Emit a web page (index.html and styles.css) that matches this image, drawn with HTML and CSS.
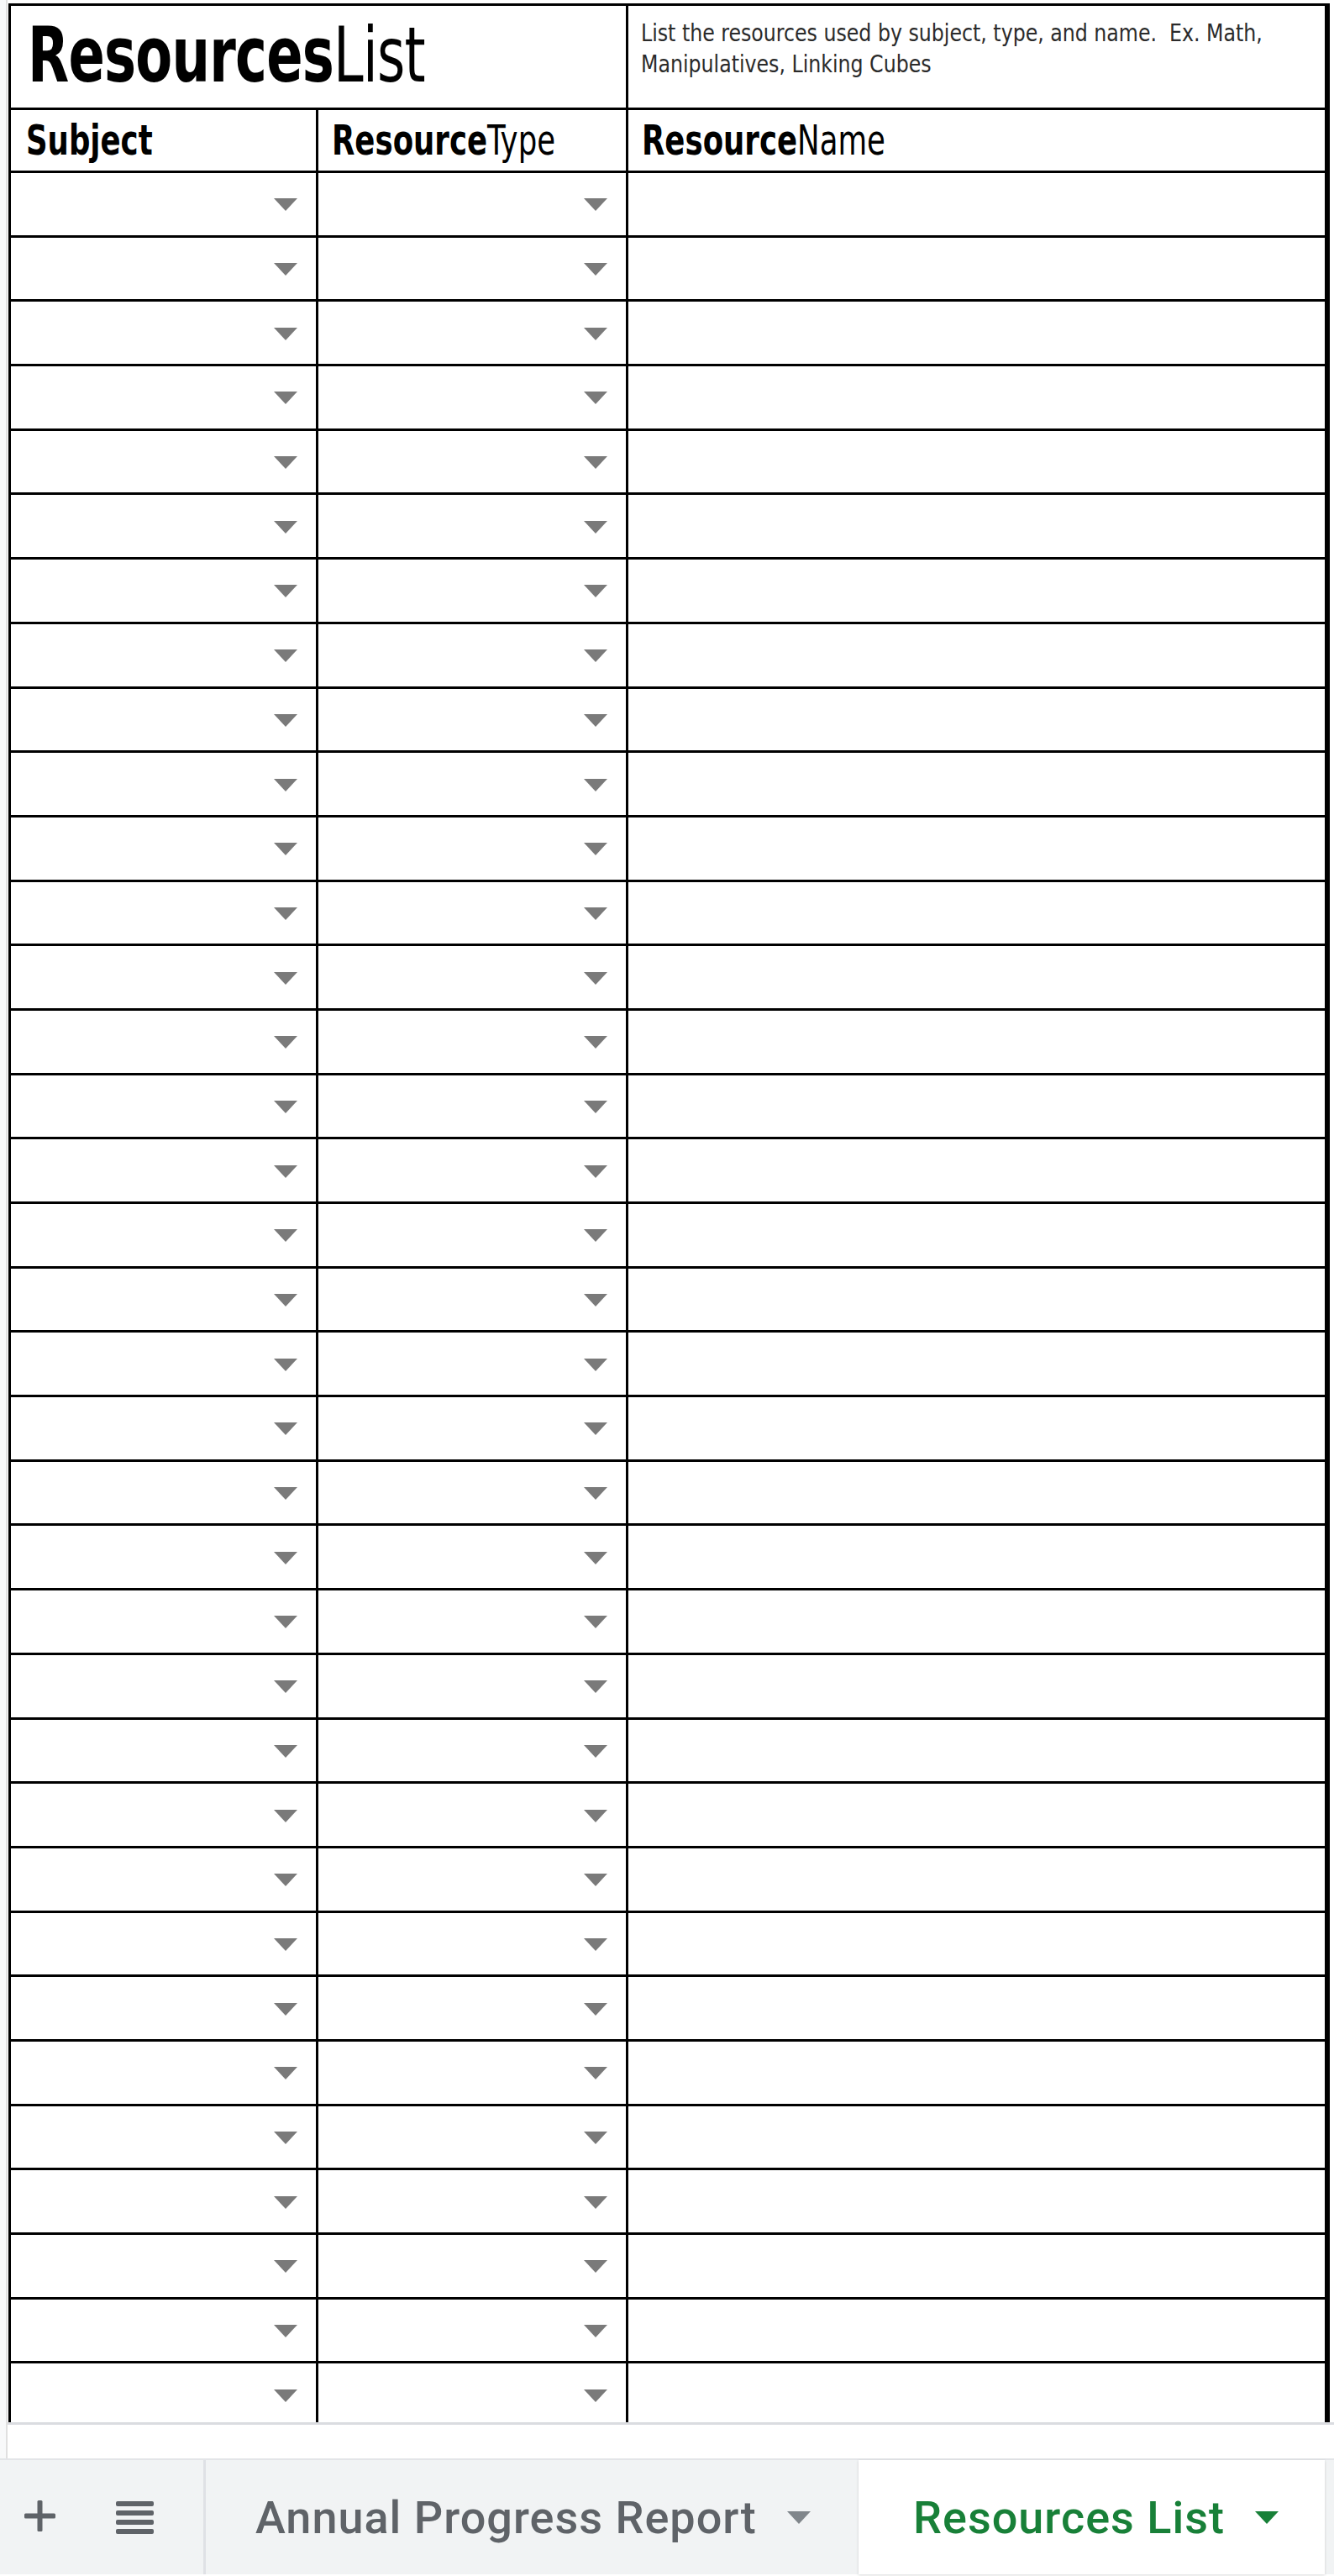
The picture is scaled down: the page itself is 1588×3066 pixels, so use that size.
FILE: index.html
```html
<!DOCTYPE html>
<html lang="en">
<head>
<meta charset="utf-8">
<title>Resources List</title>
<link rel="stylesheet" href="styles.css">
</head>
<body>
<div class="main">
  <div class="gutter"></div>
  <div class="sheet">
    <div class="viewport">
      <div class="table">
        <div class="row title-row">
          <div class="cell title-cell"><span class="cond"><span class="b">Resources</span>List</span></div>
          <div class="cell c3 desc"><span class="desc-text">List the resources used by subject, type, and name.&nbsp; Ex. Math, Manipulatives, Linking Cubes</span></div>
        </div>
        <div class="row head-row">
          <div class="cell c1 head"><span class="cond"><span class="b">Subject</span></span></div>
          <div class="cell c2 head"><span class="cond"><span class="b">Resource</span>Type</span></div>
          <div class="cell c3 head"><span class="cond"><span class="b">Resource</span>Name</span></div>
        </div>
        <div class="row data-row"><div class="cell c1 drop"></div><div class="cell c2 drop"></div><div class="cell c3"></div></div>
        <div class="row data-row"><div class="cell c1 drop"></div><div class="cell c2 drop"></div><div class="cell c3"></div></div>
        <div class="row data-row"><div class="cell c1 drop"></div><div class="cell c2 drop"></div><div class="cell c3"></div></div>
        <div class="row data-row"><div class="cell c1 drop"></div><div class="cell c2 drop"></div><div class="cell c3"></div></div>
        <div class="row data-row"><div class="cell c1 drop"></div><div class="cell c2 drop"></div><div class="cell c3"></div></div>
        <div class="row data-row"><div class="cell c1 drop"></div><div class="cell c2 drop"></div><div class="cell c3"></div></div>
        <div class="row data-row"><div class="cell c1 drop"></div><div class="cell c2 drop"></div><div class="cell c3"></div></div>
        <div class="row data-row"><div class="cell c1 drop"></div><div class="cell c2 drop"></div><div class="cell c3"></div></div>
        <div class="row data-row"><div class="cell c1 drop"></div><div class="cell c2 drop"></div><div class="cell c3"></div></div>
        <div class="row data-row"><div class="cell c1 drop"></div><div class="cell c2 drop"></div><div class="cell c3"></div></div>
        <div class="row data-row"><div class="cell c1 drop"></div><div class="cell c2 drop"></div><div class="cell c3"></div></div>
        <div class="row data-row"><div class="cell c1 drop"></div><div class="cell c2 drop"></div><div class="cell c3"></div></div>
        <div class="row data-row"><div class="cell c1 drop"></div><div class="cell c2 drop"></div><div class="cell c3"></div></div>
        <div class="row data-row"><div class="cell c1 drop"></div><div class="cell c2 drop"></div><div class="cell c3"></div></div>
        <div class="row data-row"><div class="cell c1 drop"></div><div class="cell c2 drop"></div><div class="cell c3"></div></div>
        <div class="row data-row"><div class="cell c1 drop"></div><div class="cell c2 drop"></div><div class="cell c3"></div></div>
        <div class="row data-row"><div class="cell c1 drop"></div><div class="cell c2 drop"></div><div class="cell c3"></div></div>
        <div class="row data-row"><div class="cell c1 drop"></div><div class="cell c2 drop"></div><div class="cell c3"></div></div>
        <div class="row data-row"><div class="cell c1 drop"></div><div class="cell c2 drop"></div><div class="cell c3"></div></div>
        <div class="row data-row"><div class="cell c1 drop"></div><div class="cell c2 drop"></div><div class="cell c3"></div></div>
        <div class="row data-row"><div class="cell c1 drop"></div><div class="cell c2 drop"></div><div class="cell c3"></div></div>
        <div class="row data-row"><div class="cell c1 drop"></div><div class="cell c2 drop"></div><div class="cell c3"></div></div>
        <div class="row data-row"><div class="cell c1 drop"></div><div class="cell c2 drop"></div><div class="cell c3"></div></div>
        <div class="row data-row"><div class="cell c1 drop"></div><div class="cell c2 drop"></div><div class="cell c3"></div></div>
        <div class="row data-row"><div class="cell c1 drop"></div><div class="cell c2 drop"></div><div class="cell c3"></div></div>
        <div class="row data-row"><div class="cell c1 drop"></div><div class="cell c2 drop"></div><div class="cell c3"></div></div>
        <div class="row data-row"><div class="cell c1 drop"></div><div class="cell c2 drop"></div><div class="cell c3"></div></div>
        <div class="row data-row"><div class="cell c1 drop"></div><div class="cell c2 drop"></div><div class="cell c3"></div></div>
        <div class="row data-row"><div class="cell c1 drop"></div><div class="cell c2 drop"></div><div class="cell c3"></div></div>
        <div class="row data-row"><div class="cell c1 drop"></div><div class="cell c2 drop"></div><div class="cell c3"></div></div>
        <div class="row data-row"><div class="cell c1 drop"></div><div class="cell c2 drop"></div><div class="cell c3"></div></div>
        <div class="row data-row"><div class="cell c1 drop"></div><div class="cell c2 drop"></div><div class="cell c3"></div></div>
        <div class="row data-row"><div class="cell c1 drop"></div><div class="cell c2 drop"></div><div class="cell c3"></div></div>
        <div class="row data-row"><div class="cell c1 drop"></div><div class="cell c2 drop"></div><div class="cell c3"></div></div>
        <div class="row data-row"><div class="cell c1 drop"></div><div class="cell c2 drop"></div><div class="cell c3"></div></div>
        <div class="row data-row"><div class="cell c1 drop"></div><div class="cell c2 drop"></div><div class="cell c3"></div></div>
      </div>
    </div>
  </div>
</div>
<div class="tabbar">
  <div class="tools">
    <svg class="icon plus" width="37" height="37" viewBox="0 0 37 37" aria-label="Add sheet"><rect x="15.5" y="0" width="6" height="37" rx="1.5" fill="#5f6368"/><rect x="0" y="15.5" width="37" height="6" rx="1.5" fill="#5f6368"/></svg>
    <svg class="icon list" width="45" height="39" viewBox="0 0 45 39" aria-label="All sheets"><rect x="0" y="0" width="45" height="6" rx="2" fill="#5f6368"/><rect x="0" y="11" width="45" height="6" rx="2" fill="#5f6368"/><rect x="0" y="22" width="45" height="6" rx="2" fill="#5f6368"/><rect x="0" y="33" width="45" height="6" rx="2" fill="#5f6368"/></svg>
  </div>
  <div class="tab">
    <span class="tab-name">Annual Progress Report</span>
    <span class="caret"></span>
  </div>
  <div class="tab active">
    <span class="tab-name">Resources List</span>
    <span class="caret"></span>
  </div>
</div>
</body>
</html>
```
FILE: styles.css
```css
* { box-sizing: border-box; }

html, body {
  margin: 0;
  padding: 0;
  background: #ffffff;
}

body {
  width: 1588px;
  height: 3066px;
  overflow: hidden;
  font-family: "Liberation Sans Narrow", "DejaVu Sans Condensed", "DejaVu Sans", sans-serif;
  font-stretch: condensed;
  color: #000;
}

.main {
  display: flex;
  height: 2928px;
  border-bottom: 2px solid #e3e5e8;
}

.gutter {
  width: 9px;
  background: #f8f9fa;
  border-right: 2px solid #e0e0e0;
}

.sheet {
  flex: 1;
}

.viewport {
  height: 2886px;
  overflow: hidden;
  padding: 4px 0 0 1px;
  border-bottom: 3px solid #dadce0;
}

.table {
  width: 1573px;
  border-top: 3px solid #000;
  border-left: 3px solid #000;
  border-right: 6px solid #000;
}

.row {
  display: flex;
  border-bottom: 3px solid #000;
}

.title-row { height: 124px; }
.head-row { height: 75px; }
.data-row { height: 76.7px; }

.cell {
  height: 100%;
  display: flex;
  align-items: center;
  overflow: hidden;
}

.c1 {
  width: 366px;
  border-right: 3px solid #000;
}

.c2 {
  width: 369px;
  border-right: 3px solid #000;
}

.c3 {
  flex: 1;
}

/* narrow display face approximation */
.cond {
  display: inline-block;
  white-space: nowrap;
  transform: scaleX(0.79);
  transform-origin: 0 50%;
}

.title-cell {
  width: 735px;
  border-right: 3px solid #000;
  padding-left: 20px;
  padding-bottom: 4px;
  font-size: 90px;
  line-height: 1;
  letter-spacing: -1px;
}

.b { font-weight: 700; }

.desc {
  align-items: flex-start;
  padding: 14px 0 0 15px;
  font-size: 28px;
  line-height: 37px;
  color: #2b2b2b;
}

.desc-text {
  display: block;
  width: 848px;
  flex: none;
  transform: scaleX(0.94);
  transform-origin: 0 0;
}

.head {
  padding-left: 16px;
  font-size: 50px;
  line-height: 1;
}

.c1.head { padding-left: 18px; }

.drop {
  justify-content: flex-end;
  padding-right: 22px;
}

.drop::after {
  content: "";
  width: 0;
  height: 0;
  border-left: 14px solid transparent;
  border-right: 14px solid transparent;
  border-top: 15px solid #7a7a7a;
  margin-top: 2px;
}

/* tab bar */
.tabbar {
  display: flex;
  height: 136px;
  background: #f1f3f4;
  font-family: Roboto, "Liberation Sans", sans-serif;
  font-stretch: normal;
}

.tools {
  width: 245px;
  display: flex;
  align-items: center;
  gap: 72px;
  padding-left: 29px;
  border-right: 3px solid #dfe1e5;
}

.icon { display: block; }
.plus { margin-top: -3px; }

.tab {
  display: flex;
  align-items: center;
  padding-left: 59px;
  width: 777px;
  color: #5f6368;
  font-size: 54px;
  font-weight: 500;
  letter-spacing: 1px;
}

.tab .caret {
  margin-left: 36px;
  width: 0;
  height: 0;
  border-left: 14px solid transparent;
  border-right: 14px solid transparent;
  border-top: 15px solid #80868b;
}

.tab.active {
  width: 555px;
  padding-left: 65px;
  background: #ffffff;
  color: #188038;
  box-shadow: 0 1px 3px rgba(60, 64, 67, 0.2);
}

.tab.active .caret {
  border-top-color: #188038;
}
```
